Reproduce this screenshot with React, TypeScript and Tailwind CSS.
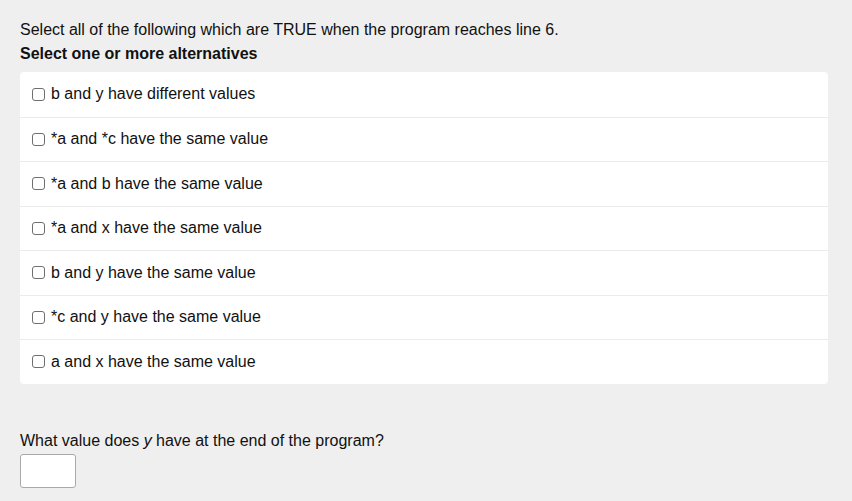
const OPTIONS = [
  "b and y have different values",
  "*a and *c have the same value",
  "*a and b have the same value",
  "*a and x have the same value",
  "b and y have the same value",
  "*c and y have the same value",
  "a and x have the same value",
];

export default function App() {
  return (
    <div className="min-h-[501px] w-[852px] bg-[#efefef] pl-[20px] pr-[24px] pt-[18px] font-['Liberation_Sans',Arial,sans-serif] text-[16px] leading-[24px] text-[#111]">
      <p>Select all of the following which are TRUE when the program reaches line 6.</p>
      <p className="font-bold">Select one or more alternatives</p>

      {/* answer list */}
      <div className="mt-[6px] overflow-hidden rounded-[4px] bg-white">
        {OPTIONS.map((label, i) => (
          <label
            key={label}
            className={`flex h-[44.5px] cursor-pointer items-center gap-[6px] px-[12px] ${
              i > 0 ? "border-t border-[#ececec]" : ""
            }`}
          >
            <span className="h-[13px] w-[13px] shrink-0 rounded-[3px] border border-[#6f6f6f] bg-white" />
            <span>{label}</span>
          </label>
        ))}
      </div>

      <p className="mt-[45px]">
        What value does <i>y</i> have at the end of the program?
      </p>
      <input
        type="text"
        className="mt-[1px] block h-[34px] w-[56px] rounded-[3px] border border-[#a9a9a9] bg-white outline-none"
      />
    </div>
  );
}
